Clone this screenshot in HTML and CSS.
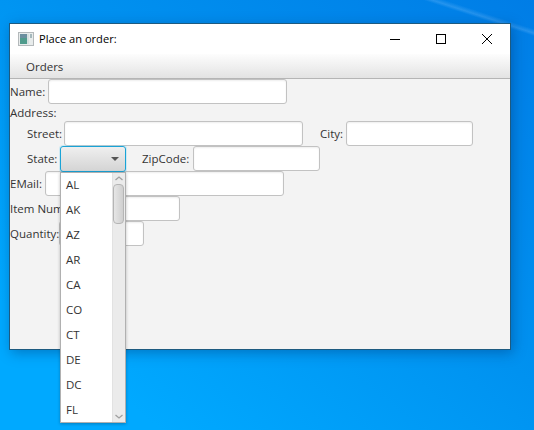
FILE: index.html
```html
<!DOCTYPE html>
<html lang="en">
<head>
<meta charset="utf-8">
<title>Place an order:</title>
<link rel="stylesheet" href="styles.css">
</head>
<body>
<div class="desktop">
  <div class="window">
    <header class="titlebar">
      <svg class="app-icon" width="16" height="14" viewBox="0 0 16 14">
        <rect x="0.5" y="0.5" width="15" height="13" fill="#e8ecec" stroke="#b4b9bb"/>
        <rect x="2" y="2" width="7" height="10" fill="#4f9b8c"/>
        <rect x="2" y="2" width="7" height="4" fill="#6b8f9f"/>
        <rect x="9" y="2" width="2" height="10" fill="#d5e0df"/>
        <rect x="12" y="2" width="2" height="4" fill="#a5b8bc"/>
      </svg>
      <span class="title">Place an order:</span>
      <div class="controls">
        <svg class="ctl" width="46" height="30" viewBox="0 0 46 30"><path d="M18 15.5H28" stroke="#000" fill="none"/></svg>
        <svg class="ctl" width="46" height="30" viewBox="0 0 46 30"><rect x="18.5" y="10.5" width="9" height="9" stroke="#000" fill="none"/></svg>
        <svg class="ctl" width="46" height="30" viewBox="0 0 46 30"><path d="M18 10L28 20M28 10L18 20" stroke="#000" fill="none"/></svg>
      </div>
    </header>
    <nav class="menubar"><span class="menu">Orders</span></nav>
    <main class="form">
      <div class="row"><label class="l-name">Name:</label><input class="field w239" type="text"></div>
      <div class="row label-row"><label>Address:</label></div>
      <div class="row indent">
        <label class="l-street">Street:</label><input class="field w239" type="text">
        <label class="l-city">City:</label><input class="field w127" type="text">
      </div>
      <div class="row indent">
        <label class="l-state">State:</label>
        <div class="combo"><span class="arrow"></span></div>
        <label class="l-zip">ZipCode:</label><input class="field w127" type="text">
      </div>
      <div class="row"><label class="l-email">EMail:</label><input class="field w239" type="text"></div>
      <div class="row"><label class="l-item">Item Number:</label><input class="field w97" type="text"></div>
      <div class="row"><label class="l-qty">Quantity:</label><input class="field w85" type="text"></div>
    </main>
  </div>
  <div class="dropdown">
    <ul class="options">
      <li>AL</li><li>AK</li><li>AZ</li><li>AR</li><li>CA</li>
      <li>CO</li><li>CT</li><li>DE</li><li>DC</li><li>FL</li>
    </ul>
    <div class="scrollbar">
      <svg class="sb-arrow" width="14" height="11" viewBox="0 0 14 11"><path d="M3.5 7L7 4L10.500 7" stroke="#a0a0a0" stroke-width="1.300" fill="none"/></svg>
      <div class="thumb"></div>
      <svg class="sb-arrow bottom" width="14" height="11" viewBox="0 0 14 11"><path d="M3.5 4L7 7L10.500 4" stroke="#a0a0a0" stroke-width="1.300" fill="none"/></svg>
    </div>
  </div>
</div>
</body>
</html>
```
FILE: styles.css
```css
* { box-sizing: border-box; }
html, body { margin: 0; padding: 0; }
body { font-family: "Open Sans", "Noto Sans", sans-serif; font-size: 11.5px; color: #333; }
.desktop {
  position: relative;
  width: 534px;
  height: 430px;
  overflow: hidden;
  background:
    linear-gradient(18deg, transparent 94%, rgba(120, 190, 250, .3) 94.5%, transparent 95.2%),
    linear-gradient(to bottom left, #007de6 0%, #0092f0 45%, #00a9ff 85%, #00a9ff 100%);
}
.window {
  position: absolute;
  left: 9px;
  top: 23px;
  width: 502px;
  height: 327px;
  display: flex;
  flex-direction: column;
  background: #f3f3f3;
  border: 1px solid #1d5a80;
  box-shadow: 2px 3px 12px rgba(0, 50, 110, .4);
}
.titlebar { height: 30px; display: flex; align-items: center; background: #fff; padding-left: 8px; flex: none; }
.app-icon { flex: none; }
.title { margin-left: 5px; margin-top: -2px; color: #000; font-size: 11.1px; }
.controls { margin-left: auto; display: flex; }
.ctl { display: block; }
.menubar {
  height: 25px;
  flex: none;
  display: flex;
  align-items: center;
  padding-left: 16px;
  background: linear-gradient(#fdfdfd, #e3e3e3);
  border-bottom: 1px solid #b5b5b5;
}
.menu { color: #333; }
.form { display: flex; flex-direction: column; }
.row { display: flex; align-items: center; height: 25px; white-space: nowrap; }
.label-row { height: 17px; }
.indent { padding-left: 17px; }
label { color: #333; flex: none; }
.l-name { width: 38px; }
.l-street { width: 37px; }
.l-city { width: 26px; margin-left: 17px; }
.l-state { width: 33px; }
.l-zip { width: 51px; margin-left: 16px; }
.l-email { width: 35px; }
.l-item { width: 73px; }
.l-qty { width: 49px; }
.field {
  height: 25px;
  border: 1px solid #c2c2c2;
  border-radius: 3px;
  background: #fff;
  box-shadow: inset 0 1px 2px #eee;
  padding: 0;
  outline: none;
}
.w239 { width: 239px; }
.w127 { width: 127px; }
.w97 { width: 97px; }
.w85 { width: 85px; }
.combo {
  position: relative;
  flex: none;
  width: 66px;
  height: 26px;
  border: 1px solid #1aa3d6;
  border-radius: 3px;
  background: linear-gradient(#efefef, #d4d4d4);
  box-shadow: 0 0 0 1px rgba(140, 215, 240, .35);
}
.arrow {
  position: absolute;
  right: 6px;
  top: 10px;
  border-left: 4.500px solid transparent;
  border-right: 4.500px solid transparent;
  border-top: 4.500px solid #555;
}
.dropdown {
  position: absolute;
  left: 60px;
  top: 172px;
  width: 66px;
  height: 251px;
  display: flex;
  background: #fff;
  border: 1px solid #b0b0b0;
  box-shadow: 0 1px 3px rgba(0, 0, 0, .25);
}
.options { list-style: none; margin: 0; padding: 0; flex: 1; }
.options li { height: 25px; line-height: 24px; padding-left: 5px; color: #333; }
.scrollbar {
  position: relative;
  width: 13px;
  flex: none;
  display: flex;
  flex-direction: column;
  background: #ebebeb;
  border-left: 1px solid #e2e2e2;
}
.sb-arrow { display: block; flex: none; margin-left: -1px; }
.thumb {
  width: 11px;
  height: 40px;
  border: 1px solid #b5b5b5;
  border-radius: 4px;
  background: linear-gradient(90deg, #e6e6e6, #cfcfcf);
}
.bottom { margin-top: auto; }
```
